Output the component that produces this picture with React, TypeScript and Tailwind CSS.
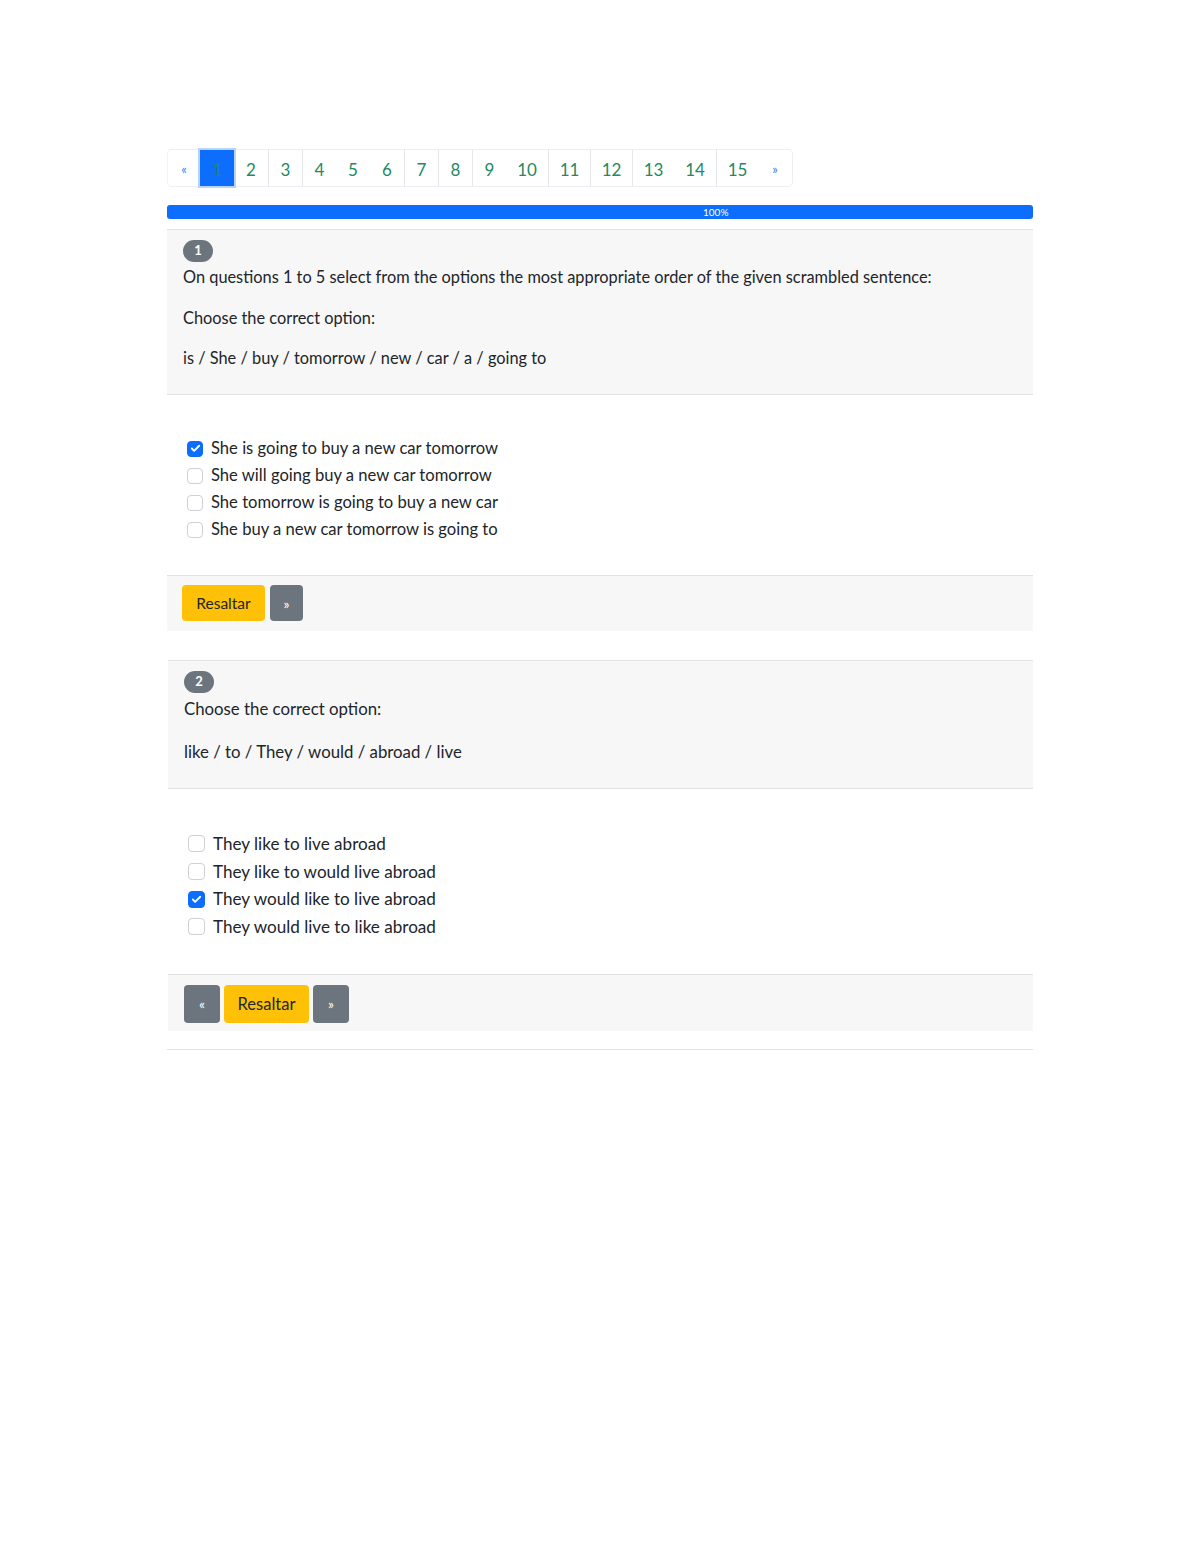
import { Check } from 'lucide-react';

type PageItem = { label: string; width: number; borderLeft?: boolean; active?: boolean; arrow?: boolean };

const PAGES: PageItem[] = [
  { label: '«', width: 32, arrow: true },
  { label: '1', width: 34, active: true },
  { label: '2', width: 34 },
  { label: '3', width: 34, borderLeft: true },
  { label: '4', width: 34, borderLeft: true },
  { label: '5', width: 34 },
  { label: '6', width: 34 },
  { label: '7', width: 34, borderLeft: true },
  { label: '8', width: 34, borderLeft: true },
  { label: '9', width: 34, borderLeft: true },
  { label: '10', width: 42 },
  { label: '11', width: 42, borderLeft: true },
  { label: '12', width: 42, borderLeft: true },
  { label: '13', width: 42, borderLeft: true },
  { label: '14', width: 42 },
  { label: '15', width: 42, borderLeft: true },
  { label: '»', width: 34, arrow: true },
];

const FONT = { fontFamily: 'Lato, "Open Sans", sans-serif' };

function Pagination() {
  return (
    <div className="flex h-[38px] w-fit rounded-[5px] border border-[#eceef1] border-l-[#f3f3f3] bg-white">
      {PAGES.map((p) => (
        <div
          key={p.label}
          className={
            'flex h-full items-center justify-center pt-[4px] ' +
            (p.borderLeft ? 'border-l border-[#e4e7eb] ' : '') +
            (p.active ? 'bg-[#0d6efd] ring-2 ring-[#b9d3fb] ' : '') +
            (p.arrow ? 'text-[13px] text-[#3b82f6] ' : 'text-[17px] text-[#23895e] ')
          }
          style={{ width: p.width }}
        >
          {p.label}
        </div>
      ))}
    </div>
  );
}

function Box({ checked, size }: { checked: boolean; size: number }) {
  return (
    <span
      className={
        'flex shrink-0 items-center justify-center rounded-[4px] border ' +
        (checked ? 'border-[#0d6efd] bg-[#0d6efd]' : 'border-[#cdd0d4] bg-white')
      }
      style={{ width: size, height: size }}
    >
      {checked && <Check className="h-[11px] w-[11px] text-white" strokeWidth={4} />}
    </span>
  );
}

function Badge({ n }: { n: number }) {
  return (
    <div className="flex h-[22px] w-[30px] items-center justify-center rounded-full bg-[#6c757d] text-[13px] font-bold text-white">
      {n}
    </div>
  );
}

function GrayBtn({ label, w, h }: { label: string; w: number; h: number }) {
  return (
    <div
      className="flex items-center justify-center rounded-[4px] bg-[#6c757d] text-[14px] text-white"
      style={{ width: w, height: h }}
    >
      {label}
    </div>
  );
}

function YellowBtn({ w, h, size }: { w: number; h: number; size: number }) {
  return (
    <div
      className="flex items-center justify-center rounded-[4px] bg-[#ffc107] pt-[2px] text-[#212529]"
      style={{ width: w, height: h, fontSize: size }}
    >
      Resaltar
    </div>
  );
}

export default function App() {
  const opts1 = [
    { text: 'She is going to buy a new car tomorrow', checked: true },
    { text: 'She will going buy a new car tomorrow', checked: false },
    { text: 'She tomorrow is going to buy a new car', checked: false },
    { text: 'She buy a new car tomorrow is going to', checked: false },
  ];
  const opts2 = [
    { text: 'They like to live abroad', checked: false },
    { text: 'They like to would live abroad', checked: false },
    { text: 'They would like to live abroad', checked: true },
    { text: 'They would live to like abroad', checked: false },
  ];

  return (
    <div className="min-h-[1553px] bg-white text-[#212529]" style={FONT}>
      <div className="mx-auto w-[866px] pt-[149px]">
        <Pagination />

        <div className="mt-[18px] flex h-[14px] items-center rounded-[3px] bg-[#0d6efd] pl-[536px] text-[10px] text-white">
          100%
        </div>

        {/* question 1 */}
        <div className="mt-[10px] text-[16.35px]">
          <div className="border-y border-[#e2e2e2] bg-[#f7f7f7] px-[16px] pb-[24px] pt-[10px]">
            <Badge n={1} />
            <p className="mt-[3px] leading-[24px]">
              On questions 1 to 5 select from the options the most appropriate order of the given scrambled sentence:
            </p>
            <p className="mt-[17px] leading-[24px]">Choose the correct option:</p>
            <p className="mt-[16px] leading-[24px]">is / She / buy / tomorrow / new / car / a / going to</p>
          </div>
          <div className="px-[20px] pb-[32px] pt-[40px]">
            {opts1.map((o) => (
              <div key={o.text} className="flex h-[27px] items-center gap-[8px] text-[16.6px]">
                <Box checked={o.checked} size={16} />
                <span>{o.text}</span>
              </div>
            ))}
          </div>
          <div className="flex gap-[5px] border-t border-[#e2e2e2] bg-[#f7f7f7] px-[15px] pb-[10px] pt-[9px]">
            <YellowBtn w={83} h={36} size={15.5} />
            <GrayBtn label="»" w={33} h={36} />
          </div>
        </div>

        {/* question 2 */}
        <div className="ml-px mt-[29px] text-[16.8px]">
          <div className="border-y border-[#e2e2e2] bg-[#f7f7f7] px-[16px] pb-[24px] pt-[10px]">
            <Badge n={2} />
            <p className="mt-[4px] leading-[24px]">Choose the correct option:</p>
            <p className="mt-[19px] leading-[24px]">like / to / They / would / abroad / live</p>
          </div>
          <div className="px-[20px] pb-[33px] pt-[41px]">
            {opts2.map((o) => (
              <div key={o.text} className="flex h-[27.7px] items-center gap-[8px] text-[17.1px]">
                <Box checked={o.checked} size={17} />
                <span>{o.text}</span>
              </div>
            ))}
          </div>
          <div className="flex gap-[4px] border-t border-[#e2e2e2] bg-[#f7f7f7] px-[16px] pb-[8px] pt-[10px]">
            <GrayBtn label="«" w={36} h={38} />
            <YellowBtn w={85} h={38} size={16.5} />
            <GrayBtn label="»" w={36} h={38} />
          </div>
        </div>

        <div className="mt-[18px] border-t border-[#e2e2e2]" />
      </div>
    </div>
  );
}
